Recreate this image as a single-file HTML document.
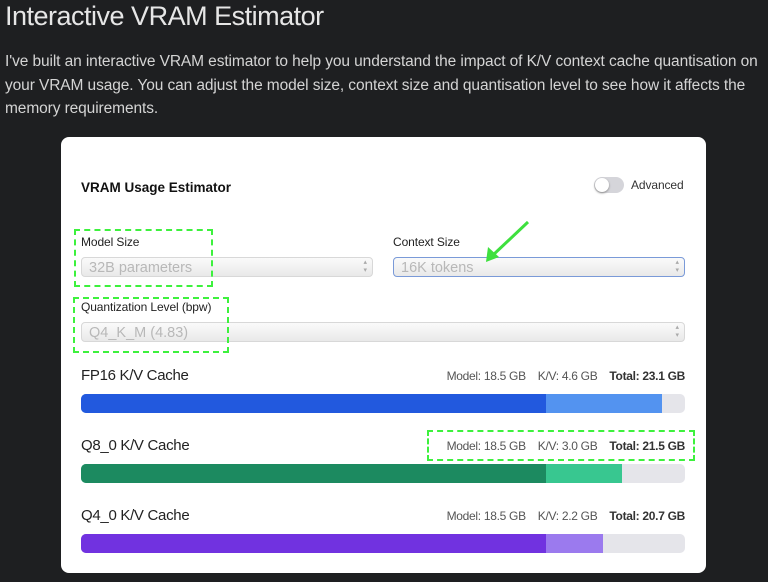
<!DOCTYPE html>
<html><head><style>
body{margin:0;width:768px;height:582px;background:#1e1f21;font-family:"Liberation Sans",sans-serif;position:relative;overflow:hidden}
.a{position:absolute;white-space:nowrap}
h1{position:absolute;left:5px;top:1px;margin:0;font-weight:400;font-size:27px;color:#e6e6e6;letter-spacing:-0.5px}
.p{position:absolute;left:5px;top:50px;color:#d4d4d4;font-size:15.5px;line-height:23.5px;letter-spacing:-0.1px;width:770px}
.card{position:absolute;left:61px;top:137px;width:645px;height:436px;background:#fff;border-radius:8px}
.lbl{font-size:12px;color:#222;letter-spacing:-0.1px}
.sel{position:absolute;height:20px;border:1px solid #d8d8d8;border-radius:4px;background:linear-gradient(#fafafa,#e9e9e9);color:#b8b8b8;font-size:14.5px;line-height:20px;padding-left:7px;box-sizing:border-box}
.sel:after{content:"\25B4\A\25BE";white-space:pre;position:absolute;right:5px;top:1px;font-size:7px;line-height:8px;color:#aaa}
.h{font-size:15px;color:#222;letter-spacing:-0.3px}
.st{font-size:12px;color:#555;letter-spacing:-0.3px;text-align:right;right:83px}
.st b{color:#333;margin-left:12px}.st span{margin-left:12px}
.bar{position:absolute;left:81px;width:604px;height:19px;border-radius:5px;background:#e5e5ea;overflow:hidden}
.bar i,.bar u{position:absolute;top:0;height:19px;left:0}
.g{position:absolute;border:2px dashed #3df13d}
</style></head><body>
<h1>Interactive VRAM Estimator</h1>
<div class="p">I've built an interactive VRAM estimator to help you understand the impact of K/V context cache quantisation on<br>your VRAM usage. You can adjust the model size, context size and quantisation level to see how it affects the<br>memory requirements.</div>
<div class="card"></div>
<div class="a" style="left:81px;top:180px;font-size:13.5px;font-weight:bold;color:#111">VRAM Usage Estimator</div>
<div class="a" style="left:594px;top:177px;width:30px;height:16px;border-radius:8px;background:#d5d5da"></div>
<div class="a" style="left:595px;top:178px;width:14px;height:14px;border-radius:7px;background:#fff;box-shadow:0 1px 2px #888"></div>
<div class="a lbl" style="left:631px;top:178px;color:#333">Advanced</div>
<div class="a lbl" style="left:81px;top:235px">Model Size</div>
<div class="sel" style="left:81px;top:257px;width:292px">32B parameters</div>
<div class="a lbl" style="left:393px;top:235px">Context Size</div>
<div class="sel" style="left:393px;top:257px;width:292px;border-color:#7a9ad8">16K tokens</div>
<div class="a lbl" style="left:81px;top:300px">Quantization Level (bpw)</div>
<div class="sel" style="left:81px;top:322px;width:604px">Q4_K_M (4.83)</div>
<div class="a h" style="left:81px;top:367px">FP16 K/V Cache</div>
<div class="a st" style="top:369px">Model: 18.5 GB<span>K/V: 4.6 GB</span><b>Total: 23.1 GB</b></div>
<div class="bar" style="top:394px"><u style="width:581px;background:#5393f0"></u><i style="width:465px;background:#2259de"></i></div>
<div class="a h" style="left:81px;top:437px">Q8_0 K/V Cache</div>
<div class="a st" style="top:439px">Model: 18.5 GB<span>K/V: 3.0 GB</span><b>Total: 21.5 GB</b></div>
<div class="bar" style="top:464px"><u style="width:541px;background:#38c790"></u><i style="width:465px;background:#1c8a60"></i></div>
<div class="a h" style="left:81px;top:507px">Q4_0 K/V Cache</div>
<div class="a st" style="top:509px">Model: 18.5 GB<span>K/V: 2.2 GB</span><b>Total: 20.7 GB</b></div>
<div class="bar" style="top:534px"><u style="width:522px;background:#9b7aee"></u><i style="width:465px;background:#7132e0"></i></div>
<div class="g" style="left:74px;top:229px;width:135px;height:54px"></div>
<div class="g" style="left:73px;top:297px;width:152px;height:52px"></div>
<div class="g" style="left:427px;top:430px;width:264px;height:27px"></div>
<svg class="a" style="left:0;top:0" width="768" height="582"><path d="M528 222 L492 256" stroke="#3ee03e" stroke-width="3"/><path d="M486 262 L488 247 L499 257 Z" fill="#3ee03e"/></svg>
</body></html>
